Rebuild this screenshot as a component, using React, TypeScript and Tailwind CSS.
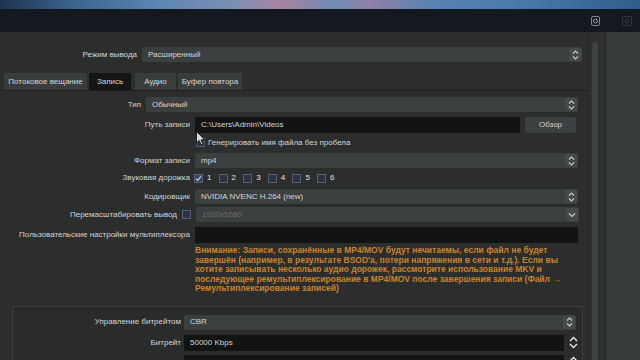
import React from 'react';

const UpDown = () => (
  <svg width="7" height="10" viewBox="0 0 7 10" fill="none" stroke="#c9cccc" strokeWidth="1.1">
    <path d="M1 3.5 L3.5 1 L6 3.5" />
    <path d="M1 6.5 L3.5 9 L6 6.5" />
  </svg>
);

const Down = () => (
  <svg width="8" height="6" viewBox="0 0 8 6" fill="none" stroke="#c9cccc" strokeWidth="1.2">
    <path d="M1 1.5 L4 4.5 L7 1.5" />
  </svg>
);

interface SelectProps {
  value: string;
  width: string;
  icon?: 'updown' | 'down';
  disabled?: boolean;
}

// combo box like the Qt dark theme
const Select: React.FC<SelectProps> = ({ value, width, icon = 'updown', disabled }) => (
  <div className={`${width} h-[15px] shrink-0 bg-[#3c3f3f] rounded-[2px] flex items-center justify-between pl-[6px] pr-[1px]`}>
    <span className={disabled ? 'text-[#6b6f6f]' : 'text-[#d6d6d6]'}>{value}</span>
    <div className="w-[12px] h-[13px] bg-[#474a4a] rounded-[2px] flex items-center justify-center">
      {icon === 'updown' ? <UpDown /> : <Down />}
    </div>
  </div>
);

const Check: React.FC<{ checked?: boolean }> = ({ checked }) => (
  <div
    className={`w-[9px] h-[9px] border border-[#56607a] flex items-center justify-center shrink-0 ${
      checked ? 'bg-[#3a4666]' : 'bg-[#2d3342]'
    }`}
  >
    {checked && (
      <svg width="7" height="7" viewBox="0 0 7 7" fill="none" stroke="#c8cde0" strokeWidth="1.2">
        <path d="M1 3.6 L2.8 5.4 L6 1.4" />
      </svg>
    )}
  </div>
);

const Label: React.FC<{ w: string; children: React.ReactNode }> = ({ w, children }) => (
  <div className={`${w} text-right whitespace-nowrap shrink-0`}>{children}</div>
);

const SpinArrows = () => (
  <div className="flex flex-col items-center justify-center gap-[1px] w-[12px]">
    <svg width="9" height="6" viewBox="0 0 9 6" fill="none" stroke="#e6e6e6" strokeWidth="1.4">
      <path d="M1 5 L4.5 1.5 L8 5" />
    </svg>
    <svg width="9" height="6" viewBox="0 0 9 6" fill="none" stroke="#e6e6e6" strokeWidth="1.4">
      <path d="M1 1 L4.5 4.5 L8 1" />
    </svg>
  </div>
);

export default function App() {
  const tracks = ['1', '2', '3', '4', '5', '6'];

  return (
    <div className="w-[640px] h-[360px] overflow-hidden bg-[#2c2e2e] flex flex-col font-['Liberation_Sans',Arial,sans-serif] text-[8px] text-[#d4d4d4] relative">
      {/* desktop strip */}
      <div className="h-[9px] shrink-0 bg-[linear-gradient(90deg,#1d3552,#3c6690_12%,#5d86b4_25%,#7d8fb4_37%,#a9839f_44%,#6f8cb6_52%,#8e7fa8_58%,#5783b2_68%,#4a7bab_80%,#3d6d9c_90%,#2f5d8c)]" />

      {/* title bar */}
      <div className="h-[23px] shrink-0 bg-[#141920] flex items-center justify-end pr-[8px] gap-[22px]">
        <svg width="9" height="10" viewBox="0 0 9 10" fill="none">
          <rect x="0.5" y="0.5" width="8" height="9" rx="1.5" stroke="#7c8798" />
          <circle cx="4.5" cy="5" r="2" stroke="#9aa3b2" />
        </svg>
        <svg width="10" height="10" viewBox="0 0 10 10" fill="none">
          <rect x="0.5" y="0.5" width="9" height="9" rx="1.5" stroke="#2f3643" />
          <circle cx="5" cy="5" r="2" stroke="#2f3643" />
        </svg>
      </div>

      <div className="flex-1 flex min-h-0">
        {/* settings page */}
        <div className="w-[589px] shrink-0 border-r border-[#232525] overflow-hidden pt-[15px]">
          <div className="flex items-center gap-[5px]">
            <Label w="w-[137px]">Режим вывода</Label>
            <Select value="Расширенный" width="w-[440px]" />
          </div>

          {/* tabs */}
          <div className="mt-[11px] h-[17px] flex pl-[4px] border-b border-[#1e2020] box-content">
            <div className="w-[83px] bg-[#3a3d3d] flex items-center justify-center">Потоковое вещание</div>
            <div className="w-[42px] ml-[2px] bg-[#141616] flex items-center justify-center">Запись</div>
            <div className="w-[41px] ml-[4px] bg-[#3a3d3d] flex items-center justify-center">Аудио</div>
            <div className="w-[64px] ml-[2px] bg-[#3a3d3d] flex items-center justify-center">Буфер повтора</div>
          </div>

          <div className="mt-[6px] flex items-center gap-[5px]">
            <Label w="w-[141px]">Тип</Label>
            <Select value="Обычный" width="w-[432px]" />
          </div>

          <div className="mt-[5px] h-[16px] flex items-center gap-[5px]">
            <Label w="w-[190px]">Путь записи</Label>
            <div className="w-[325px] h-[16px] bg-[#121414] flex items-center pl-[6px]">C:\Users\Admin\Videos</div>
            <div className="w-[51px] h-[16px] bg-[#3d4040] rounded-[2px] flex items-center justify-center">Обзор</div>
          </div>

          <div className="mt-[4px] h-[11px] flex items-center gap-[3px] pl-[196px]">
            <Check />
            <span>Генерировать имя файла без пробела</span>
          </div>

          <div className="mt-[5px] flex items-center gap-[5px]">
            <Label w="w-[190px]">Формат записи</Label>
            <Select value="mp4" width="w-[383px]" />
          </div>

          <div className="mt-[4px] h-[12px] flex items-center gap-[4px]">
            <Label w="w-[190px]">Звуковая дорожка</Label>
            <div className="flex items-center">
              {tracks.map((t) => (
                <div key={t} className="w-[24.6px] flex items-center gap-[4px]">
                  <Check checked={t === '1'} />
                  <span className="text-[#e4e4e4]">{t}</span>
                </div>
              ))}
            </div>
          </div>

          <div className="mt-[5px] flex items-center gap-[5px]">
            <Label w="w-[190px]">Кодировщик</Label>
            <Select value="NVIDIA NVENC H.264 (new)" width="w-[383px]" />
          </div>

          <div className="mt-[3px] flex items-center gap-[5px]">
            <Label w="w-[177px]">Перемасштабировать вывод</Label>
            <Check />
            <Select value="1920x1080" width="w-[383px]" icon="down" disabled />
          </div>

          <div className="mt-[5px] h-[16px] flex items-center gap-[5px]">
            <Label w="w-[190px]">Пользовательские настройки мультиплексора</Label>
            <div className="w-[383px] h-[16px] bg-[#121414]" />
          </div>

          <div className="mt-[3px] pl-[195px] font-bold text-[8.5px] text-[#c98426] leading-[9.6px] whitespace-nowrap">
            Внимание: Записи, сохранённые в MP4/MOV будут нечитаемы, если файл не будет
            <br />
            завершён (например, в результате BSOD'а, потери напряжения в сети и т.д.). Если вы
            <br />
            хотите записывать несколько аудио дорожек, рассмотрите использование MKV и
            <br />
            последующее ремультиплексирование в MP4/MOV после завершения записи (Файл →
            <br />
            Ремультиплексирование записей)
          </div>

          {/* encoder settings group */}
          <div className="mt-[12px] ml-[12px] w-[571px] h-[80px] border border-b-0 border-[#3d4040] bg-[#2a2c2c] pt-[8px]">
            <div className="flex items-center gap-[3px]">
              <Label w="w-[168px]">Управление битрейтом</Label>
              <Select value="CBR" width="w-[392px]" />
            </div>
            <div className="mt-[5px] h-[16px] flex items-center gap-[3px]">
              <Label w="w-[168px]">Битрейт</Label>
              <div className="w-[380px] h-[16px] bg-[#121414] flex items-center pl-[6px]">50000 Kbps</div>
              <SpinArrows />
            </div>
            <div className="mt-[4px] h-[16px] flex items-center gap-[3px]">
              <Label w="w-[168px]">Интервал ключевых кадров (0=авто)</Label>
              <div className="w-[380px] h-[16px] bg-[#121414] flex items-center pl-[6px]">0 s</div>
              <SpinArrows />
            </div>
          </div>
        </div>

        {/* scrollbar */}
        <div className="w-[18px] shrink-0 bg-[#2e3030] pl-[3px] pt-[10px]">
          <div className="w-[6px] h-full rounded-t-full bg-[#3f4242]" />
        </div>

        <div className="flex-1 bg-[#393c3c]" />
      </div>

      {/* mouse pointer */}
      <svg className="absolute left-[196px] top-[131px]" width="10" height="15" viewBox="0 0 10 15">
        <path d="M0.5 0.5 L0.5 12 L3.2 9.4 L5.2 14 L7 13.2 L5.1 8.8 L8.8 8.8 Z" fill="#d8dadc" stroke="#1a1c1e" strokeWidth="1" />
      </svg>
    </div>
  );
}
